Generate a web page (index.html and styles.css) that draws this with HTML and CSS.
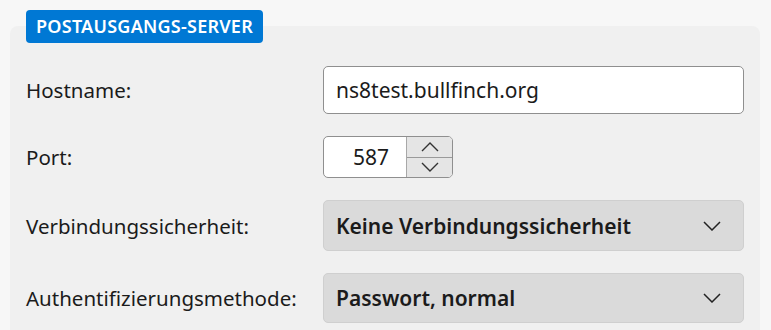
FILE: index.html
```html
<!DOCTYPE html>
<html lang="de">
<head>
    <meta charset="UTF-8">
    <title>Postausgangs-Server</title>
    <link rel="stylesheet" href="styles.css">
</head>
<body>
    <div class="wrap">
        <div class="group">
            <div class="legend">POSTAUSGANGS-SERVER</div>
            <div class="rows">
                <label class="label">Hostname:</label>
                <div class="text_input">ns8test.bullfinch.org</div>

                <label class="label">Port:</label>
                <div class="spinner">
                    <div class="value">587</div>
                    <div class="buttons">
                        <div class="btn">
                            <svg width="18" height="10" viewBox="0 0 18 10"><path d="M1 9 L9 1 L17 9" fill="none" stroke="#333" stroke-width="1.4"/></svg>
                        </div>
                        <div class="btn">
                            <svg width="18" height="10" viewBox="0 0 18 10"><path d="M1 1 L9 9 L17 1" fill="none" stroke="#333" stroke-width="1.4"/></svg>
                        </div>
                    </div>
                </div>

                <label class="label">Verbindungssicherheit:</label>
                <div class="select">
                    <span>Keine Verbindungssicherheit</span>
                    <svg width="18" height="10" viewBox="0 0 18 10"><path d="M1 1 L9 9 L17 1" fill="none" stroke="#222" stroke-width="1.5"/></svg>
                </div>

                <label class="label">Authentifizierungsmethode:</label>
                <div class="select last">
                    <span>Passwort, normal</span>
                    <svg width="18" height="10" viewBox="0 0 18 10"><path d="M1 1 L9 9 L17 1" fill="none" stroke="#222" stroke-width="1.5"/></svg>
                </div>
            </div>
        </div>
    </div>
</body>
</html>
```

FILE: styles.css
```css
* {
    padding: 0;
    margin: 0;
    box-sizing: border-box;
}
body {
    background: #f7f7f7;
    font-family: "Noto Sans", "Open Sans", sans-serif;
    color: #1b1b1b;
}
.wrap {
    padding: 26px 11px 0 10px;
    height: 330px;
    overflow: hidden;
}
.group {
    display: flex;
    flex-direction: column;
    align-items: flex-start;
    background: #f0f0f0;
    border-radius: 8px 8px 0 0;
    padding: 0 16px 20px 16px;
    height: 330px;
}
.legend {
    margin-top: -16px;
    height: 33px;
    line-height: 33px;
    padding: 0 10px;
    background: #0078d4;
    color: #fff;
    font-size: 18px;
    letter-spacing: 0.25px;
    font-weight: 600;
    border-radius: 4px;
    margin-bottom: 23px;
}
.rows {
    align-self: stretch;
    display: grid;
    grid-template-columns: 297px 1fr;
    row-gap: 22px;
    align-items: center;
}
.label {
    font-size: 20.5px;
}
.text_input {
    height: 48px;
    background: #fff;
    border: 1px solid #8f8f8f;
    border-radius: 5px;
    padding-left: 12px;
    font-size: 21px;
    line-height: 46px;
}
.spinner {
    width: 130px;
    height: 42px;
    display: flex;
    background: #fff;
    border: 1px solid #8f8f8f;
    border-radius: 5px;
    overflow: hidden;
}
.spinner .value {
    width: 82px;
    text-align: right;
    padding-right: 17px;
    font-size: 21px;
    line-height: 40px;
}
.spinner .buttons {
    flex: 1;
    display: flex;
    flex-direction: column;
    border-left: 1px solid #a8a8a8;
    background: #e5e5e5;
}
.spinner .btn {
    flex: 1;
    display: flex;
    align-items: center;
    justify-content: center;
}
.spinner .btn + .btn {
    border-top: 1px solid #9a9a9a;
}
.select {
    height: 51px;
    display: flex;
    align-items: center;
    justify-content: space-between;
    background: #dadada;
    border: 1px solid #cfcfcf;
    border-radius: 5px;
    padding: 0 22px 0 12px;
    font-size: 21px;
    font-weight: 600;
}
.select.last {
    height: 50px;
}
```
